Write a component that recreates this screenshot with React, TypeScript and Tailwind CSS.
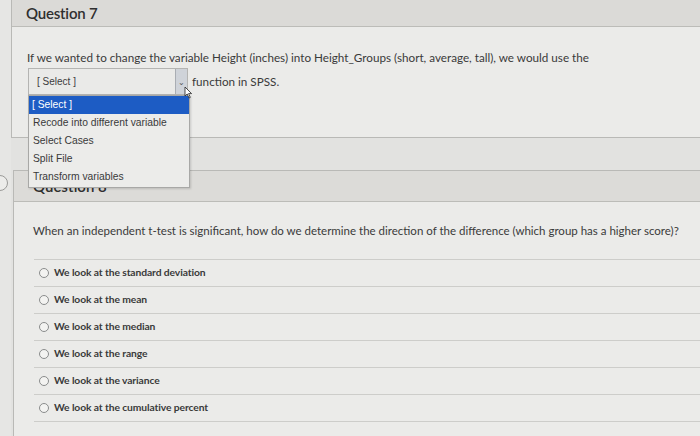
import React from "react";

const lato = { fontFamily: "Lato, 'Open Sans', sans-serif" };

const options = [
  "We look at the standard deviation",
  "We look at the mean",
  "We look at the median",
  "We look at the range",
  "We look at the variance",
  "We look at the cumulative percent",
];

const dropdownItems = [
  "Recode into different variable",
  "Select Cases",
  "Split File",
  "Transform variables",
];

function Radio() {
  return (
    <span className="inline-block w-[10px] h-[10px] rounded-full border-[1.5px] border-[#8a8c8c] bg-[#f3f3f1] shrink-0" />
  );
}

export default function App() {
  return (
    <div
      className="relative w-[700px] h-[436px] overflow-hidden bg-[#e2e2e0] flex text-[#3b3b3b]"
      style={lato}
    >
      {/* left gutter */}
      <div className="w-[11px] shrink-0 bg-[#e6e6e4]" />

      <div className="flex-1 flex flex-col">
        {/* Question 7 card */}
        <div className="h-[138px] shrink-0 border-l border-b border-[#b9b9b6] bg-[#ebebe9] flex flex-col">
          <div className="h-[27px] shrink-0 bg-[#dbdad7] border-b border-[#bcbcb8] flex items-center pl-[14px]">
            <span className="text-[15px] font-semibold text-[#2f2f2f] tracking-[-0.2px]">Question 7</span>
          </div>
          <div className="pl-[15px] pt-[23px]">
            <p className="text-[11.7px] leading-[14px] text-[#3a3a3a]">
              If we wanted to change the variable Height (inches) into Height_Groups (short, average, tall), we would use the
            </p>
            <div className="flex items-center mt-[4px]">
              <div className="ml-[1px] w-[160px] h-[27px] border border-[#b4b4b2] bg-[#eaeae8] flex items-center justify-between">
                <span
                  className="pl-[8px] text-[10px] text-[#3d3d3d]"
                  style={{ fontFamily: "'Liberation Sans', Arial, sans-serif" }}
                >
                  [ Select ]
                </span>
                <span className="w-[12px] h-full bg-[#cfd3d9] border-l border-[#a9adb3] flex items-center justify-center text-[8px] text-[#555]">
                  ⌄
                </span>
              </div>
              <span className="ml-[4px] text-[11.7px] text-[#3a3a3a]">function in SPSS.</span>
            </div>
          </div>
        </div>

        {/* gap between cards */}
        <div className="h-[32px] shrink-0" />

        {/* Question 8 card */}
        <div className="flex-1 ml-[2px] border-l border-t border-[#b9b9b6] bg-[#ebebe9] flex flex-col">
          <div className="h-[31px] shrink-0 bg-[#dcdbd8] border-b border-[#bcbcb8] flex items-center pl-[19px]">
            <span className="text-[15px] font-semibold text-[#2f2f2f]">Question 8</span>
          </div>
          <div className="pl-[19px] pt-[22px]">
            <p className="text-[11.5px] leading-[14px] text-[#3a3a3a] whitespace-nowrap">
              When an independent t-test is significant, how do we determine the direction of the difference (which group has a higher score)?
            </p>
          </div>
          <div className="mt-[21px] ml-[20px] border-t border-[#cdcdca]">
            {options.map((o) => (
              <div
                key={o}
                className="h-[27px] border-b border-[#cdcdca] flex items-center gap-[5px] pl-[5px]"
              >
                <Radio />
                <span className="text-[10.3px] font-bold text-[#3a3a3a] tracking-[-0.1px]">{o}</span>
              </div>
            ))}
          </div>
        </div>
      </div>

      {/* partial circle at the left edge */}
      <span className="absolute left-[-8px] top-[175px] w-[16px] h-[16px] rounded-full border border-[#9a9a98] bg-[#ececea]" />

      {/* open dropdown menu */}
      <div
        className="absolute left-[28px] top-[95px] w-[162px] border border-[#a8a8a6] bg-[#ececea] shadow-[1px_1px_2px_rgba(0,0,0,0.15)]"
        style={{ fontFamily: "'Liberation Sans', Arial, sans-serif" }}
      >
        <div className="h-[18px] bg-[#1d5cc4] text-white text-[10.3px] flex items-center pl-[3px]">
          [ Select ]
        </div>
        {dropdownItems.map((d) => (
          <div key={d} className="h-[18px] text-[10.3px] flex items-center pl-[4px] text-[#3a3a3a]">
            {d}
          </div>
        ))}
        <div className="h-[1px]" />
      </div>

      {/* mouse cursor */}
      <svg className="absolute left-[184px] top-[86px]" width="9" height="13" viewBox="0 0 9 13">
        <path d="M1 1 L1 10 L3.2 8 L5 12 L6.3 11.4 L4.6 7.6 L7.6 7.6 Z" fill="#fff" stroke="#222" strokeWidth="0.8" />
      </svg>
    </div>
  );
}
